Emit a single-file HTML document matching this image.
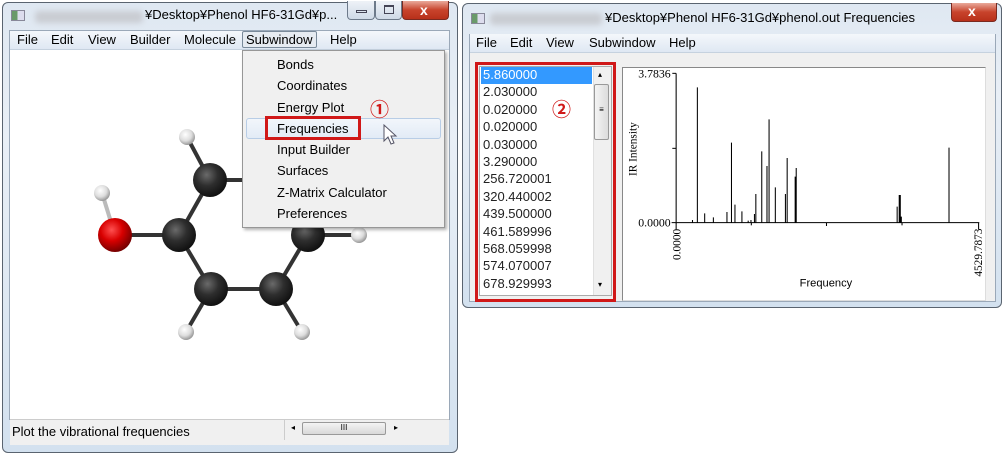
<!DOCTYPE html>
<html><head><meta charset="utf-8"><style>
*{margin:0;padding:0;box-sizing:border-box}
body{width:1004px;height:455px;background:#fff;position:relative;overflow:hidden;font-family:"Liberation Sans","Noto Sans CJK JP",sans-serif;font-size:12.5px;color:#000}
.win{position:absolute;border:1px solid #5a6470;border-radius:6px;background:linear-gradient(#dfe8f2,#e9eff6 30%,#d3e1ef);}
.title{position:absolute;left:36px;top:8px;font-size:13px;color:#000}
.blur{position:absolute;height:12px;background:#c9ccd2;filter:blur(3px);border-radius:4px}
.icon{position:absolute;left:9px;top:9px;width:14px;height:11px;background:linear-gradient(90deg,#6a9a6a 45%,#dde 45%);border:1px solid #889}
.menu{position:absolute;background:linear-gradient(#f4f7fb,#dfe8f3);border-bottom:1px solid #c6d2df;font-size:13px}
.menu span{position:absolute;top:1px}
.abs{position:absolute}
.btn{position:absolute;top:1px;height:19px;border:1px solid #6d7a8a;border-top:none;border-radius:0 0 4px 4px;background:linear-gradient(#eef2f7,#cfdae7)}
</style></head><body>

<!-- LEFT WINDOW -->
<div class="win" style="left:2px;top:2px;width:456px;height:451px"></div>
<div class="icon" style="left:11px;top:10px"></div>
<div class="blur" style="left:35px;top:11px;width:108px"></div>
<div class="title" style="left:145px;top:7px">¥Desktop¥Phenol HF6-31Gd¥p...</div>
<div class="btn" style="left:347px;width:28px"><div class="abs" style="left:8px;top:9px;width:11px;height:3px;border:1px solid #445"></div></div>
<div class="btn" style="left:375px;width:27px"><div class="abs" style="left:8px;top:4px;width:10px;height:9px;border:1px solid #445;border-top-width:2px"></div></div>
<div class="btn" style="left:402px;width:47px;background:linear-gradient(#e9a99a,#c8432c 50%,#b8301a);border-color:#7a2a20"><div class="abs" style="left:17px;top:1px;color:#fff;font-weight:bold;font-size:14px">x</div></div>

<div class="abs" style="left:9px;top:30px;width:441px;height:390px;background:#fff;border:1px solid #9aa8b8"></div>
<div class="menu" style="left:10px;top:31px;width:439px;height:19px">
<span style="left:7px">File</span><span style="left:41px">Edit</span><span style="left:78px">View</span><span style="left:120px">Builder</span><span style="left:174px">Molecule</span>
<span style="left:232px;top:0;padding:0 3px;border:1px solid #7a8a9a;border-radius:2px;background:#e6ebf1">Subwindow</span><span style="left:320px">Help</span>
</div>

<!-- molecule -->
<svg class="abs" style="left:0;top:0" width="460" height="455">
<defs>
<radialGradient id="c" cx="40%" cy="35%" r="65%"><stop offset="0" stop-color="#6a6a6a"/><stop offset=".5" stop-color="#2e2e2e"/><stop offset="1" stop-color="#111"/></radialGradient>
<radialGradient id="o" cx="40%" cy="35%" r="65%"><stop offset="0" stop-color="#ff5050"/><stop offset=".5" stop-color="#d80000"/><stop offset="1" stop-color="#700"/></radialGradient>
<radialGradient id="h" cx="40%" cy="35%" r="65%"><stop offset="0" stop-color="#fff"/><stop offset=".6" stop-color="#ddd"/><stop offset="1" stop-color="#999"/></radialGradient>
</defs>
<g stroke="#333" stroke-width="4">
<line x1="187" y1="137" x2="210" y2="180"/><line x1="210" y1="180" x2="179" y2="235"/><line x1="210" y1="180" x2="245" y2="180"/>
<line x1="179" y1="235" x2="211" y2="289"/><line x1="211" y1="289" x2="276" y2="289"/><line x1="276" y1="289" x2="308" y2="235"/>
<line x1="211" y1="289" x2="186" y2="332"/><line x1="276" y1="289" x2="302" y2="332"/><line x1="308" y1="235" x2="359" y2="235"/>
<line x1="102" y1="193" x2="115" y2="235" stroke="#bbb"/><line x1="115" y1="235" x2="179" y2="235"/>
</g>
<circle cx="187" cy="137" r="8" fill="url(#h)"/><circle cx="102" cy="193" r="8" fill="url(#h)"/>
<circle cx="186" cy="332" r="8" fill="url(#h)"/><circle cx="302" cy="332" r="8" fill="url(#h)"/><circle cx="359" cy="235" r="8" fill="url(#h)"/>
<circle cx="210" cy="180" r="17" fill="url(#c)"/><circle cx="179" cy="235" r="17" fill="url(#c)"/>
<circle cx="211" cy="289" r="17" fill="url(#c)"/><circle cx="276" cy="289" r="17" fill="url(#c)"/><circle cx="308" cy="235" r="17" fill="url(#c)"/>
<circle cx="115" cy="235" r="17" fill="url(#o)"/>
</svg>

<!-- dropdown -->
<div class="abs" style="left:242px;top:50px;width:203px;height:178px;background:#f0f0f0;border:1px solid #979797;box-shadow:2px 2px 3px rgba(0,0,0,.3)"></div>
<div class="abs" style="left:246px;top:118px;width:195px;height:21px;background:linear-gradient(#f2f6fb,#e2ebf6);border:1px solid #b8cde6;border-radius:3px"></div>
<div class="abs" style="left:277px;top:54px;line-height:21.3px;font-size:13px">Bonds<br>Coordinates<br>Energy Plot<br>Frequencies<br>Input Builder<br>Surfaces<br>Z-Matrix Calculator<br>Preferences</div>
<div class="abs" style="left:265px;top:116px;width:96px;height:24px;border:3px solid #d01818"></div>
<div class="abs" style="left:370px;top:95px;color:#d01818;font-size:19px;font-weight:bold">①</div>
<svg class="abs" style="left:383px;top:124px" width="16" height="22"><path d="M1 1 L1 17 L5 13 L8 20 L11 19 L8 12 L13 12 Z" fill="#fff" stroke="#556" stroke-width="1"/></svg>

<!-- status bar -->
<div class="abs" style="left:10px;top:419px;width:439px;height:26px;background:#f0f0f0;border-top:1px solid #ccc"></div>
<div class="abs" style="left:12px;top:424px;font-size:13px">Plot the vibrational frequencies</div>
<div class="abs" style="left:284px;top:420px;width:120px;height:20px;border-left:1px solid #ccc"></div>
<div class="abs" style="left:291px;top:423px;font-size:8px">◂</div>
<div class="abs" style="left:302px;top:422px;width:84px;height:13px;border:1px solid #999;border-radius:2px;background:linear-gradient(#f4f4f4,#d8d8d8);font-size:8px;text-align:center">III</div>
<div class="abs" style="left:394px;top:423px;font-size:8px">▸</div>

<!-- RIGHT WINDOW -->
<div class="win" style="left:462px;top:3px;width:540px;height:305px"></div>
<div class="icon" style="left:471px;top:13px"></div>
<div class="blur" style="left:490px;top:13px;width:112px"></div>
<div class="title" style="left:605px;top:10px">¥Desktop¥Phenol HF6-31Gd¥phenol.out Frequencies</div>
<div class="btn" style="left:951px;top:3px;width:46px;background:linear-gradient(#e9a99a,#c8432c 50%,#b8301a);border-color:#7a2a20"><div class="abs" style="left:16px;top:0;color:#fff;font-weight:bold;font-size:14px">x</div></div>
<div class="abs" style="left:469px;top:34px;width:527px;height:268px;background:#f0f0f0;border:1px solid #9aa8b8"></div>
<div class="menu" style="left:470px;top:34px;width:525px;height:19px">
<span style="left:6px">File</span><span style="left:40px">Edit</span><span style="left:76px">View</span><span style="left:119px">Subwindow</span><span style="left:199px">Help</span>
</div>
<!-- list -->
<div class="abs" style="left:479px;top:66px;width:133px;height:230px;background:#fff;border:1px solid #aaa"></div>
<div class="abs" style="left:481px;top:67px;width:111px;height:17px;background:#3399ff"></div>
<div class="abs" style="left:483px;top:66px;line-height:17.4px;font-size:13px;color:#222"><span style="color:#fff">5.860000</span><br>2.030000<br>0.020000<br>0.020000<br>0.030000<br>3.290000<br>256.720001<br>320.440002<br>439.500000<br>461.589996<br>568.059998<br>574.070007<br>678.929993</div>
<div class="abs" style="left:593px;top:67px;width:18px;height:228px;background:#f0f0f0;border-left:1px solid #e0e0e0"></div>
<div class="abs" style="left:598px;top:70px;font-size:8px">▴</div>
<div class="abs" style="left:594px;top:84px;width:15px;height:56px;border:1px solid #999;border-radius:2px;background:linear-gradient(90deg,#f4f4f4,#dcdcdc);font-size:8px;text-align:center;line-height:50px">≡</div>
<div class="abs" style="left:598px;top:280px;font-size:8px">▾</div>
<div class="abs" style="left:475px;top:62px;width:141px;height:240px;border:3px solid #d01818"></div>
<div class="abs" style="left:552px;top:95px;color:#d01818;font-size:19px;font-weight:bold">②</div>

<!-- chart -->
<div class="abs" style="left:622px;top:67px;width:364px;height:234px;background:#fff;border:1px solid #888;border-right-color:#ddd;border-bottom-color:#ddd"></div>
<svg class="abs" style="left:460px;top:0" width="544" height="310" viewBox="0 0 1563 930" preserveAspectRatio="none" font-family="Liberation Serif, serif">
<g stroke="#000" stroke-width="3" fill="none">
<line x1="621" y1="220" x2="621" y2="670"/><line x1="610" y1="220" x2="621" y2="220"/><line x1="610" y1="445" x2="621" y2="445"/><line x1="608" y1="668" x2="1492" y2="668"/>
<line x1="621" y1="668" x2="621" y2="688"/><line x1="1053" y1="668" x2="1053" y2="678"/><line x1="1490" y1="668" x2="1490" y2="688"/><line x1="837" y1="668" x2="837" y2="676"/><line x1="1270" y1="668" x2="1270" y2="676"/>
<path d="M668 668V660M682 668V262M703 668V640M728 668V652M767 668V636M780 668V428M790 668V614M810 668V634M828 668V662M836 668V660M846 668V642M850 668V582M867 668V454M882 668V498M888 668V358M906 668V562M935 668V582M940 668V474M963 668V530M966 668V504M1256 668V620M1262 668V585M1265 668V585M1268 668V650M1405 668V443"/>
</g>
<g font-size="34" fill="#000">
<text x="512" y="232">3.7836</text><text x="512" y="680">0.0000</text>
<text x="976" y="860" font-family="Liberation Sans, sans-serif" font-size="32">Frequency</text>
<text transform="translate(633,780) rotate(-90)">0.0000</text>
<text transform="translate(1500,830) rotate(-90)">4529.7873</text>
<text transform="translate(507,528) rotate(-90)">IR Intensity</text>
</g>
</svg>
</body></html>
